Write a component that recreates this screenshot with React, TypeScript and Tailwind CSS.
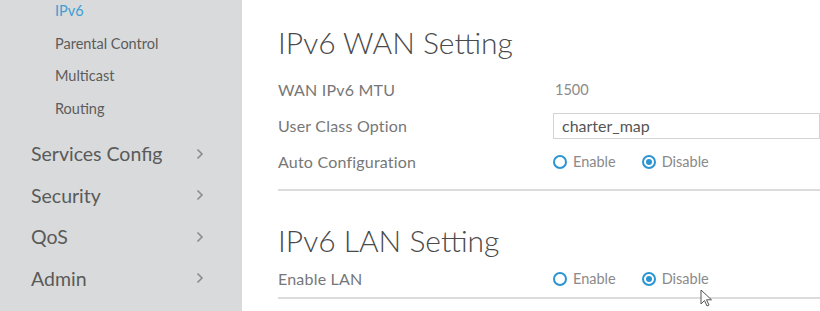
import React from 'react'

const subItems = ['IPv6', 'Parental Control', 'Multicast', 'Routing']
const topItems = ['Services Config', 'Security', 'QoS', 'Admin']

function Radio({ label, checked }: { label: string; checked?: boolean }) {
  return (
    <label className="flex items-center gap-[6px] text-[14.5px] text-[#8a8a8a]">
      <span className="flex h-[14px] w-[14px] items-center justify-center rounded-full border-2 border-[#2b94d3] bg-white">
        {checked && <span className="h-[6px] w-[6px] rounded-full bg-[#2b94d3]" />}
      </span>
      {label}
    </label>
  )
}

function Row({ label, children }: { label: string; children: React.ReactNode }) {
  return (
    <div className="flex h-[36px] items-center">
      <div className="w-[275px] shrink-0 text-[16px] tracking-[0.2px] text-[#777]">{label}</div>
      <div className="flex flex-1 items-center">{children}</div>
    </div>
  )
}

export default function App() {
  return (
    <div
      className="relative flex h-[311px] w-[820px] overflow-hidden bg-white"
      style={{ fontFamily: 'Lato, "Open Sans", sans-serif' }}
    >
      {/* Sidebar */}
      <aside className="w-[242px] shrink-0 bg-[#d9dadb]">
        <ul className="-mt-[5px]">
          {subItems.map((item, i) => (
            <li
              key={item}
              className={`flex h-[32.5px] items-center pl-[55px] text-[14.5px] ${
                i === 0 ? 'text-[#3d9fd2]' : 'text-[#5c5c5c]'
              }`}
            >
              {item}
            </li>
          ))}
        </ul>
        <ul className="mt-[8px]">
          {topItems.map((item) => (
            <li key={item} className="flex h-[41.5px] items-center pl-[31px] pr-[38px] text-[19.5px] text-[#5a5a5a]">
              <span className="flex-1">{item}</span>
              <svg width="8" height="12" viewBox="0 0 8 12" className="text-[#8c8c8c]">
                <path d="M1.5 1.5 L6 6 L1.5 10.5" fill="none" stroke="currentColor" strokeWidth="1.6" />
              </svg>
            </li>
          ))}
        </ul>
      </aside>

      {/* Main */}
      <main className="flex-1 pl-[36px] pt-[24px]">
        <h2 className="h-[36px] text-[30px] font-light leading-[36px] text-[#4a4a4a]">IPv6 WAN Setting</h2>
        <div className="mt-[12px]">
          <Row label="WAN IPv6 MTU">
            <span className="pl-[2px] text-[14.5px] text-[#8a8a8a]">1500</span>
          </Row>
          <Row label="User Class Option">
            <div className="flex h-[26px] w-full items-center border border-[#d4d4d4] pl-[8px] text-[16px] text-[#555]">
              charter_map
            </div>
          </Row>
          <Row label="Auto Configuration">
            <div className="flex items-center gap-[26px]">
              <Radio label="Enable" />
              <Radio label="Disable" checked />
            </div>
          </Row>
        </div>
        <div className="mt-[9px] border-t-2 border-[#dcdcdc]" />

        <h2 className="mt-[31px] h-[36px] text-[30px] font-light leading-[36px] text-[#4a4a4a]">IPv6 LAN Setting</h2>
        <div className="mt-[3px]">
          <Row label="Enable LAN">
            <div className="flex items-center gap-[26px]">
              <Radio label="Enable" />
              <Radio label="Disable" checked />
            </div>
          </Row>
        </div>
        <div className="border-t-2 border-[#dcdcdc]" />
      </main>

      {/* Mouse cursor */}
      <svg
        width="14"
        height="20"
        viewBox="0 0 14 20"
        className="absolute left-[700px] top-[289px]"
      >
        <path
          d="M1 1 L1 15 L4.5 11.5 L7 17 L9 16 L6.5 10.8 L11.5 10.8 Z"
          fill="white"
          stroke="#555"
          strokeWidth="1"
          strokeLinejoin="round"
        />
      </svg>
    </div>
  )
}
